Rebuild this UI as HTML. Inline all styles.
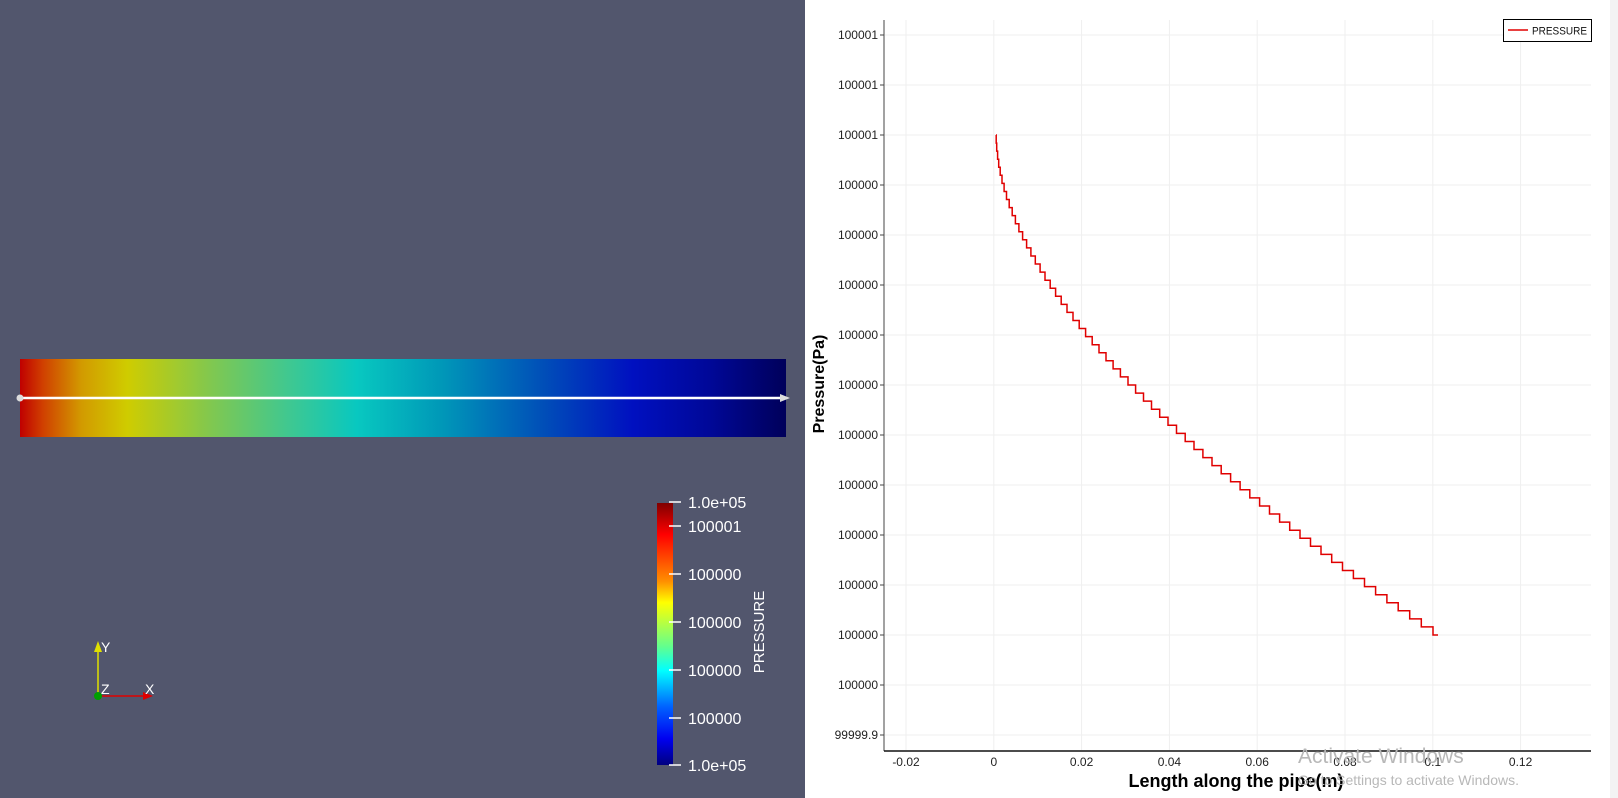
<!DOCTYPE html>
<html><head><meta charset="utf-8"><style>
html,body{margin:0;padding:0;width:1618px;height:798px;overflow:hidden;background:#fff;font-family:"Liberation Sans",sans-serif}
#left{position:absolute;left:0;top:0;width:805px;height:798px;background:#52566d}
#right{position:absolute;left:1610px;top:0;width:8px;height:798px;background:#f3f3f3}
svg{position:absolute;left:0;top:0}
</style></head><body>
<div id="left"></div><div id="right"></div>
<svg width="1618" height="798" xmlns="http://www.w3.org/2000/svg">
<defs>
<linearGradient id="pipe" x1="0" x2="1" y1="0" y2="0">
<stop offset="0" stop-color="#c00000"/><stop offset="0.03" stop-color="#d04000"/><stop offset="0.08" stop-color="#d29a00"/>
<stop offset="0.14" stop-color="#cfcc00"/><stop offset="0.25" stop-color="#80c850"/><stop offset="0.35" stop-color="#40c890"/>
<stop offset="0.44" stop-color="#08c8c0"/><stop offset="0.55" stop-color="#0098b8"/><stop offset="0.68" stop-color="#0050b8"/>
<stop offset="0.8" stop-color="#0010c0"/><stop offset="0.9" stop-color="#000898"/><stop offset="1" stop-color="#00005a"/>
</linearGradient>
<linearGradient id="cb" x1="0" x2="0" y1="0" y2="1">
<stop offset="0" stop-color="#800000"/><stop offset="0.12" stop-color="#ff0000"/><stop offset="0.3" stop-color="#ff9000"/>
<stop offset="0.38" stop-color="#ffff00"/><stop offset="0.55" stop-color="#60ff90"/><stop offset="0.64" stop-color="#00ffff"/>
<stop offset="0.78" stop-color="#0060ff"/><stop offset="0.9" stop-color="#0000f0"/><stop offset="1" stop-color="#000080"/>
</linearGradient>
</defs>
<rect x="20" y="359" width="766" height="78" fill="url(#pipe)"/>
<line x1="20" y1="398" x2="786" y2="398" stroke="#fff" stroke-width="2.5"/>
<circle cx="20" cy="398" r="3.5" fill="#ddd"/>
<path d="M780 394 L790 398 L780 402 Z" fill="#ddd"/>
<rect x="657" y="503" width="16" height="262" fill="url(#cb)"/>
<g stroke="#fff" stroke-width="1.5">
<line x1="669" y1="502" x2="681" y2="502"/><line x1="669" y1="526" x2="681" y2="526"/><line x1="669" y1="574" x2="681" y2="574"/>
<line x1="669" y1="622" x2="681" y2="622"/><line x1="669" y1="670" x2="681" y2="670"/><line x1="669" y1="718" x2="681" y2="718"/><line x1="669" y1="765" x2="681" y2="765"/>
</g>
<g fill="#fff" font-size="16">
<text x="688" y="508">1.0e+05</text><text x="688" y="532">100001</text><text x="688" y="580">100000</text>
<text x="688" y="628">100000</text><text x="688" y="676">100000</text><text x="688" y="724">100000</text><text x="688" y="771">1.0e+05</text>
<text transform="translate(764,632) rotate(-90)" text-anchor="middle" font-size="15">PRESSURE</text>
</g>
<line x1="98" y1="696" x2="98" y2="650" stroke="#e0e000" stroke-width="1.5"/>
<path d="M94 652 L98 641 L102 652 Z" fill="#e0e000"/>
<line x1="98" y1="696" x2="146" y2="696" stroke="#e00000" stroke-width="1.5"/>
<path d="M143 692 L153 696 L143 700 Z" fill="#e00000"/>
<circle cx="98" cy="696" r="4" fill="#00a000"/>
<g fill="#fff" font-size="14"><text x="101" y="652">Y</text><text x="101" y="694">Z</text><text x="145" y="694">X</text></g>

<g id="grid" stroke="#efefef" stroke-width="1"></g>
<line x1="884" y1="20" x2="884" y2="751" stroke="#444" stroke-width="1"/>
<line x1="884" y1="751" x2="1591" y2="751" stroke="#111" stroke-width="1.5"/>
<g id="labels" fill="#222" font-size="12"></g>
<path id="curve" fill="none" stroke="#e00000" stroke-width="1.5"/>
<rect x="1503.5" y="19.5" width="88" height="22" fill="#fff" stroke="#000"/>
<line x1="1508" y1="30" x2="1528" y2="30" stroke="#e00000" stroke-width="1.5"/>
<text x="1532" y="34.5" font-size="11" fill="#111" textLength="55" lengthAdjust="spacingAndGlyphs">PRESSURE</text>
<text transform="translate(824,384) rotate(-90)" text-anchor="middle" font-size="16" font-weight="bold" fill="#000">Pressure(Pa)</text>
<text x="1236" y="787" text-anchor="middle" font-size="18" font-weight="bold" fill="#000">Length along the pipe(m)</text>
<text x="1298" y="763" font-size="21" fill="#b8b8b8">Activate Windows</text>
<text x="1298" y="785" font-size="14" fill="#b8b8b8">Go to Settings to activate Windows.</text>
</svg>
<script>
var ns="http://www.w3.org/2000/svg",g=document.getElementById('grid'),L=document.getElementById('labels');
function el(p,t,a){var e=document.createElementNS(ns,t);for(var k in a)e.setAttribute(k,a[k]);p.appendChild(e);return e;}
var yl=["100001","100001","100001"];for(var i=3;i<14;i++)yl.push("100000");yl.push("99999.9");
for(var i=0;i<15;i++){var y=35+50*i;el(g,'line',{x1:885,x2:1591,y1:y,y2:y});
el(document.querySelector('svg'),'line',{x1:880,x2:884,y1:y,y2:y,stroke:'#444'});
var t=el(L,'text',{x:878,y:y+4,'text-anchor':'end'});t.textContent=yl[i];}
var xs=["-0.02","0","0.02","0.04","0.06","0.08","0.1","0.12"];
for(var j=0;j<8;j++){var x=906+87.8*j;el(g,'line',{x1:x,x2:x,y1:20,y2:750});
var t=el(L,'text',{x:x,y:766,'text-anchor':'middle'});t.textContent=xs[j];}
function f(t){return 0.8*Math.sqrt(t)+0.2*t;}
function inv(v){var a=0,b=1;for(var i=0;i<40;i++){var m=(a+b)/2;if(f(m)<v)a=m;else b=m;}return a;}
var x0=996,x1=1433,n=62,d="M"+x0+" 135",px=x0,py=135;
for(var k=1;k<=n;k++){var v=k/n,x=x0+(x1-x0)*inv(v),y=135+500*v;
d+=" L"+x.toFixed(1)+" "+py.toFixed(1)+" L"+x.toFixed(1)+" "+y.toFixed(1);py=y;}
d+=" L"+(x1+5)+" "+py;
document.getElementById('curve').setAttribute('d',d);
</script>
</body></html>
